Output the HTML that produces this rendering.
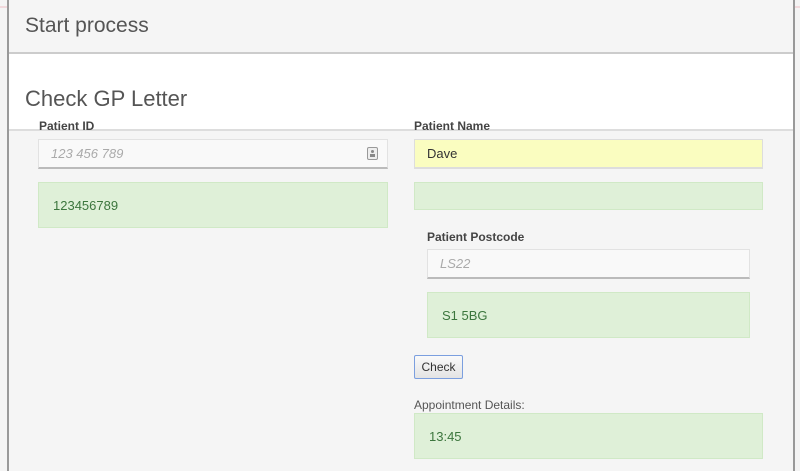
<!DOCTYPE html>
<html><head><meta charset="utf-8"><style>
*{margin:0;padding:0;box-sizing:border-box}
body{width:800px;height:471px;overflow:hidden;background:#f4f4f4;font-family:"Liberation Sans",sans-serif;position:relative;color:#444}
.a{position:absolute}
.lbl{font-weight:bold;font-size:12px;color:#444}
.inp{background:#f9f9f9;border:1px solid #e2e2e2;border-bottom:2px solid #bbb;font-size:13px;color:#aaa;font-style:italic;padding-left:12px;display:flex;align-items:center}
.ok{background:#dff0d8;border:1px solid #d0e9c6;color:#3c763d;font-size:13px;padding-left:14px;display:flex;align-items:center}
</style></head><body>
<div class="a" style="left:0;top:6px;width:800px;height:2px;background:#f1d9dc"></div>
<div class="a" style="left:8px;top:0;width:787px;height:471px;background:#f5f5f5"></div>
<div class="a" style="left:8px;top:0;width:787px;height:54px;background:#f5f5f5;border-bottom:2px solid #ccc"></div>
<div class="a" style="left:25px;top:14px;font-size:21px;color:#555">Start process</div>
<div class="a" style="left:8px;top:54px;width:787px;height:77px;background:#fff;border-bottom:2px solid #ddd"></div>
<div class="a" style="left:25px;top:86px;font-size:22px;color:#555">Check GP Letter</div>
<div class="a" style="left:7px;top:0;width:2px;height:471px;background:#999"></div>
<div class="a" style="left:793px;top:0;width:2px;height:471px;background:#999"></div>
<div class="a lbl" style="left:39px;top:119px">Patient ID</div>
<div class="a inp" style="left:38px;top:139px;width:350px;height:30px">123 456 789
<div class="a" style="right:9px;top:7px;width:11px;height:13px;border:1.5px solid #999;border-radius:2px;background:#eee"><div class="a" style="left:3px;top:2px;width:3px;height:3px;background:#888;border-radius:50%"></div><div class="a" style="left:2px;top:6px;width:5px;height:3px;background:#888"></div></div></div>
<div class="a ok" style="left:38px;top:182px;width:350px;height:46px">123456789</div>
<div class="a lbl" style="left:414px;top:119px">Patient Name</div>
<div class="a inp" style="left:414px;top:139px;width:349px;height:30px;background:#fafdc0;border-color:#ddd;color:#333;font-style:normal">Dave</div>
<div class="a ok" style="left:414px;top:182px;width:349px;height:28px"></div>
<div class="a lbl" style="left:427px;top:230px">Patient Postcode</div>
<div class="a inp" style="left:427px;top:249px;width:323px;height:30px">LS22</div>
<div class="a ok" style="left:427px;top:292px;width:323px;height:46px">S1 5BG</div>
<div class="a" style="left:414px;top:355px;width:49px;height:24px;border:1px solid #7b9fdf;border-radius:2px;background:linear-gradient(#fafafa,#e4e4e4);font-size:12px;color:#333;display:flex;align-items:center;justify-content:center">Check</div>
<div class="a" style="left:414px;top:398px;font-size:12px;color:#555">Appointment Details:</div>
<div class="a ok" style="left:414px;top:413px;width:349px;height:46px">13:45</div>
</body></html>
